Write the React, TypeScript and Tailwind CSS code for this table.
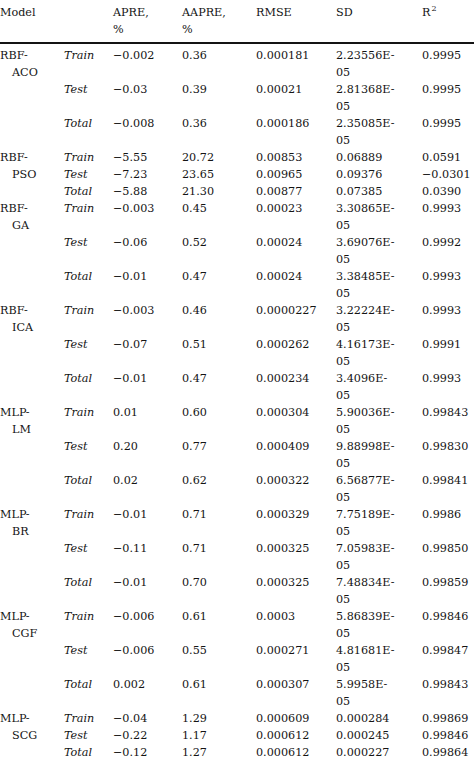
import React from "react";

type Row = [string, string, string, string, string, string];
type Group = { a: string; b: string; rows: Row[] };

const groups: Group[] = [
  { a: "RBF-", b: "ACO", rows: [
    ["Train", "−0.002", "0.36", "0.000181", "2.23556E-05", "0.9995"],
    ["Test", "−0.03", "0.39", "0.00021", "2.81368E-05", "0.9995"],
    ["Total", "−0.008", "0.36", "0.000186", "2.35085E-05", "0.9995"],
  ]},
  { a: "RBF-", b: "PSO", rows: [
    ["Train", "−5.55", "20.72", "0.00853", "0.06889", "0.0591"],
    ["Test", "−7.23", "23.65", "0.00965", "0.09376", "−0.0301"],
    ["Total", "−5.88", "21.30", "0.00877", "0.07385", "0.0390"],
  ]},
  { a: "RBF-", b: "GA", rows: [
    ["Train", "−0.003", "0.45", "0.00023", "3.30865E-05", "0.9993"],
    ["Test", "−0.06", "0.52", "0.00024", "3.69076E-05", "0.9992"],
    ["Total", "−0.01", "0.47", "0.00024", "3.38485E-05", "0.9993"],
  ]},
  { a: "RBF-", b: "ICA", rows: [
    ["Train", "−0.003", "0.46", "0.0000227", "3.22224E-05", "0.9993"],
    ["Test", "−0.07", "0.51", "0.000262", "4.16173E-05", "0.9991"],
    ["Total", "−0.01", "0.47", "0.000234", "3.4096E-05", "0.9993"],
  ]},
  { a: "MLP-", b: "LM", rows: [
    ["Train", "0.01", "0.60", "0.000304", "5.90036E-05", "0.99843"],
    ["Test", "0.20", "0.77", "0.000409", "9.88998E-05", "0.99830"],
    ["Total", "0.02", "0.62", "0.000322", "6.56877E-05", "0.99841"],
  ]},
  { a: "MLP-", b: "BR", rows: [
    ["Train", "−0.01", "0.71", "0.000329", "7.75189E-05", "0.9986"],
    ["Test", "−0.11", "0.71", "0.000325", "7.05983E-05", "0.99850"],
    ["Total", "−0.01", "0.70", "0.000325", "7.48834E-05", "0.99859"],
  ]},
  { a: "MLP-", b: "CGF", rows: [
    ["Train", "−0.006", "0.61", "0.0003", "5.86839E-05", "0.99846"],
    ["Test", "−0.006", "0.55", "0.000271", "4.81681E-05", "0.99847"],
    ["Total", "0.002", "0.61", "0.000307", "5.9958E-05", "0.99843"],
  ]},
  { a: "MLP-", b: "SCG", rows: [
    ["Train", "−0.04", "1.29", "0.000609", "0.000284", "0.99869"],
    ["Test", "−0.22", "1.17", "0.000612", "0.000245", "0.99846"],
    ["Total", "−0.12", "1.27", "0.000612", "0.000227", "0.99864"],
  ]},
];

function SD({ v }: { v: string }) {
  const i = v.indexOf("E-");
  if (i < 0) return <div>{v}</div>;
  return (
    <div>
      <div>{v.slice(0, i + 2)}</div>
      <div>{v.slice(i + 2)}</div>
    </div>
  );
}

export default function App() {
  return (
    <div
      className="w-[474px] h-[761px] overflow-hidden bg-white text-[#141414] text-[11.2px] leading-[17px]"
      style={{ fontFamily: '"DejaVu Serif", "Liberation Serif", serif' }}
    >
      <div className="grid grid-cols-[113px_69px_74px_80px_86px_1fr] pt-[4px] pb-[4px]">
        <div>Model</div>
        <div>
          <div>APRE,</div>
          <div>%</div>
        </div>
        <div>
          <div>AAPRE,</div>
          <div>%</div>
        </div>
        <div>RMSE</div>
        <div>SD</div>
        <div>
          R<span className="text-[8px] relative -top-[5px] ml-[1px]">2</span>
        </div>
      </div>
      <div className="h-[2px] bg-[#141414]" />
      <div className="pt-[3px]">
        {groups.map((g) => (
          <div key={g.a + g.b} className="flex">
            <div className="w-[64px] shrink-0">
              <div>{g.a}</div>
              <div className="pl-[12px]">{g.b}</div>
            </div>
            <div className="flex-1">
              {g.rows.map((r) => (
                <div key={r[0]} className="grid grid-cols-[49px_69px_74px_80px_86px_1fr]">
                  <div className="italic">{r[0]}</div>
                  <div>{r[1]}</div>
                  <div>{r[2]}</div>
                  <div>{r[3]}</div>
                  <SD v={r[4]} />
                  <div className="whitespace-nowrap">{r[5]}</div>
                </div>
              ))}
            </div>
          </div>
        ))}
      </div>
    </div>
  );
}
